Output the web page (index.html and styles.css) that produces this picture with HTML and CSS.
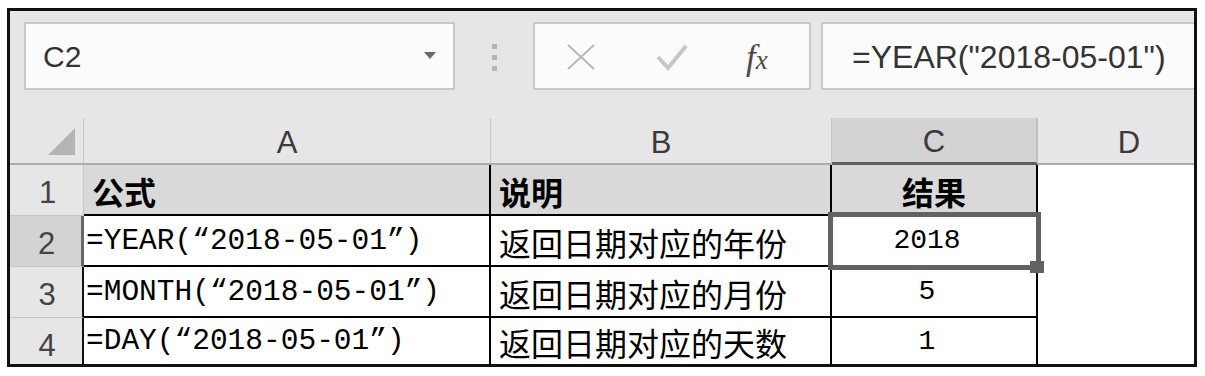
FILE: index.html
```html
<!DOCTYPE html>
<html lang="zh-CN">
<head>
<meta charset="utf-8">
<title>Excel YEAR</title>
<link rel="stylesheet" href="styles.css">
</head>
<body>
<div class="frame">
  <div class="toolbar">
    <div class="namebox">
      <span class="name">C2</span>
      <svg class="drop" width="12" height="7" viewBox="0 0 12 7"><polygon points="0,0 12,0 6,7" fill="#6b6b6b"/></svg>
    </div>
    <div class="sep"><span></span><span></span><span></span></div>
    <div class="fxbox">
      <svg class="ico-x" width="28" height="26" viewBox="0 0 28 26"><path d="M1 1 L27 25 M27 1 L1 25" stroke="#b9b9b9" stroke-width="2" fill="none"/></svg>
      <svg class="ico-ok" width="32" height="28" viewBox="0 0 32 28"><path d="M2 14 L12 25 L30 3" stroke="#c6c6c6" stroke-width="4" fill="none"/></svg>
      <span class="fx"><span class="fx-f">f</span><span class="fx-x">x</span></span>
    </div>
    <div class="formula">=YEAR("2018-05-01")</div>
  </div>
  <div class="sheet">
    <div class="corner"><svg width="27" height="27" viewBox="0 0 27 27"><polygon points="27,0 27,27 0,27" fill="#b5b5b5"/></svg></div>
    <div class="ch">A</div>
    <div class="ch">B</div>
    <div class="ch ch-sel">C</div>
    <div class="ch ch-last">D</div>

    <div class="rh">1</div>
    <div class="cell head">公式</div>
    <div class="cell head">说明</div>
    <div class="cell head center">结果</div>
    <div class="blank"></div>

    <div class="rh rh-sel">2</div>
    <div class="cell mono">=YEAR(“2018-05-01”)</div>
    <div class="cell cjk">返回日期对应的年份</div>
    <div class="cell mono value">2018</div>
    <div class="blank"></div>

    <div class="rh rh-dark">3</div>
    <div class="cell mono">=MONTH(“2018-05-01”)</div>
    <div class="cell cjk">返回日期对应的月份</div>
    <div class="cell mono value">5</div>
    <div class="blank"></div>

    <div class="rh rh-dark rh-end">4</div>
    <div class="cell mono last">=DAY(“2018-05-01”)</div>
    <div class="cell cjk last">返回日期对应的天数</div>
    <div class="cell mono value last">1</div>
    <div class="blank"></div>

    <div class="selection"></div>
    <div class="handle"></div>
  </div>
</div>
</body>
</html>
```
FILE: styles.css
```css
* { box-sizing: border-box; }

body {
  margin: 0;
  background: #ffffff;
  font-family: "Liberation Sans", Arial, sans-serif;
}

.frame {
  margin: 8px 0 0 7px;
  width: 1190px;
  height: 359px;
  border: 3px solid #111111;
  background: #e6e6e6;
  overflow: hidden;
  display: flex;
  flex-direction: column;
}

/* ---------- toolbar ---------- */
.toolbar {
  flex: 0 0 107px;
  display: flex;
  align-items: flex-start;
  padding: 11px 0 0 14px;
}

.namebox {
  flex: 0 0 431px;
  height: 68px;
  border: 2px solid #c8c8c8;
  background: #fbfbfb;
  display: flex;
  align-items: center;
  justify-content: space-between;
  padding: 2px 17px 0 17px;
}

.name {
  font-size: 30px;
  color: #333333;
}

.drop { margin-bottom: 4px; }

.sep {
  flex: 0 0 5px;
  margin-left: 37px;
  margin-top: 22px;
  display: flex;
  flex-direction: column;
  gap: 6px;
}
.sep span {
  width: 5px;
  height: 5px;
  background: #b5b5b5;
}

.fxbox {
  flex: 0 0 278px;
  margin-left: 36px;
  height: 68px;
  border: 2px solid #c8c8c8;
  background: #fbfbfb;
  display: flex;
  align-items: center;
  padding: 2px 0 0 32px;
}
.ico-ok { margin-left: 61px; }
.fx {
  margin-left: 58px;
  font-family: "Liberation Serif", "Times New Roman", serif;
  font-style: italic;
  color: #4a4a4a;
  display: flex;
  align-items: baseline;
  margin-top: 2px;
}
.fx-f { font-size: 35px; }
.fx-x { font-size: 27px; margin-left: 0; }

.formula {
  flex: 0 0 420px;
  margin-left: 10px;
  height: 68px;
  border: 2px solid #c8c8c8;
  border-right: none;
  background: #fbfbfb;
  display: flex;
  align-items: center;
  padding: 2px 0 0 29px;
  font-size: 32px;
  color: #333333;
  white-space: nowrap;
}

/* ---------- sheet ---------- */
.sheet {
  position: relative;
  display: grid;
  grid-template-columns: 74px 407px 341px 206px 182px;
  grid-template-rows: 47px 51px 51px 51px 46px;
}

.corner {
  border-right: 1px solid #c6c6c6;
  border-bottom: 2px solid #ababab;
  display: flex;
  justify-content: flex-end;
  align-items: flex-end;
  padding: 0 8px 8px 0;
}

.ch {
  border-right: 1px solid #c6c6c6;
  border-bottom: 2px solid #ababab;
  display: flex;
  justify-content: center;
  align-items: center;
  padding-top: 4px;
  font-size: 31px;
  color: #3a3a3a;
}
.ch-sel {
  background: #d3d3d3;
  border-bottom: 3px solid #5f5f5f;
  border-right: 2px solid #c0c0c0;
}
.ch-last { border-right: none; }

.rh {
  border-right: 1px solid #c6c6c6;
  border-bottom: 1px solid #c6c6c6;
  display: flex;
  justify-content: center;
  align-items: center;
  padding: 6px 0 0 2px;
  font-size: 31px;
  color: #444444;
}
.rh-sel {
  background: #d3d3d3;
  border-right: 3px solid #666666;
}
.rh-dark { border-right: 2px solid #111111; }
.rh-end { border-bottom: none; padding-top: 10px; }

.cell {
  border-right: 2px solid #000000;
  border-bottom: 2px solid #000000;
  background: #ffffff;
  display: flex;
  align-items: center;
  white-space: nowrap;
  color: #000000;
}
.cell.last { border-bottom: none; }

.head {
  background: #d9d9d9;
  font-family: "Noto Sans CJK SC", sans-serif;
  font-weight: 700;
  font-size: 32px;
  padding: 2px 0 0 8px;
}
.head.center { justify-content: center; padding-left: 0; }

.cjk {
  font-family: "Noto Sans CJK SC", sans-serif;
  font-size: 32px;
  padding: 2px 0 0 8px;
}

.mono {
  font-family: "Liberation Mono", "Courier New", monospace;
  font-size: 29.5px;
  padding: 0 0 0 2px;
}
.value {
  justify-content: center;
  font-size: 28px;
  padding: 0 14px 0 0;
}

.blank { background: #ffffff; }

.selection {
  position: absolute;
  left: 818px;
  top: 94px;
  width: 213px;
  height: 58px;
  border: 5px solid #626262;
}
.handle {
  position: absolute;
  left: 1020px;
  top: 143px;
  width: 14px;
  height: 12px;
  background: #626262;
}
```
